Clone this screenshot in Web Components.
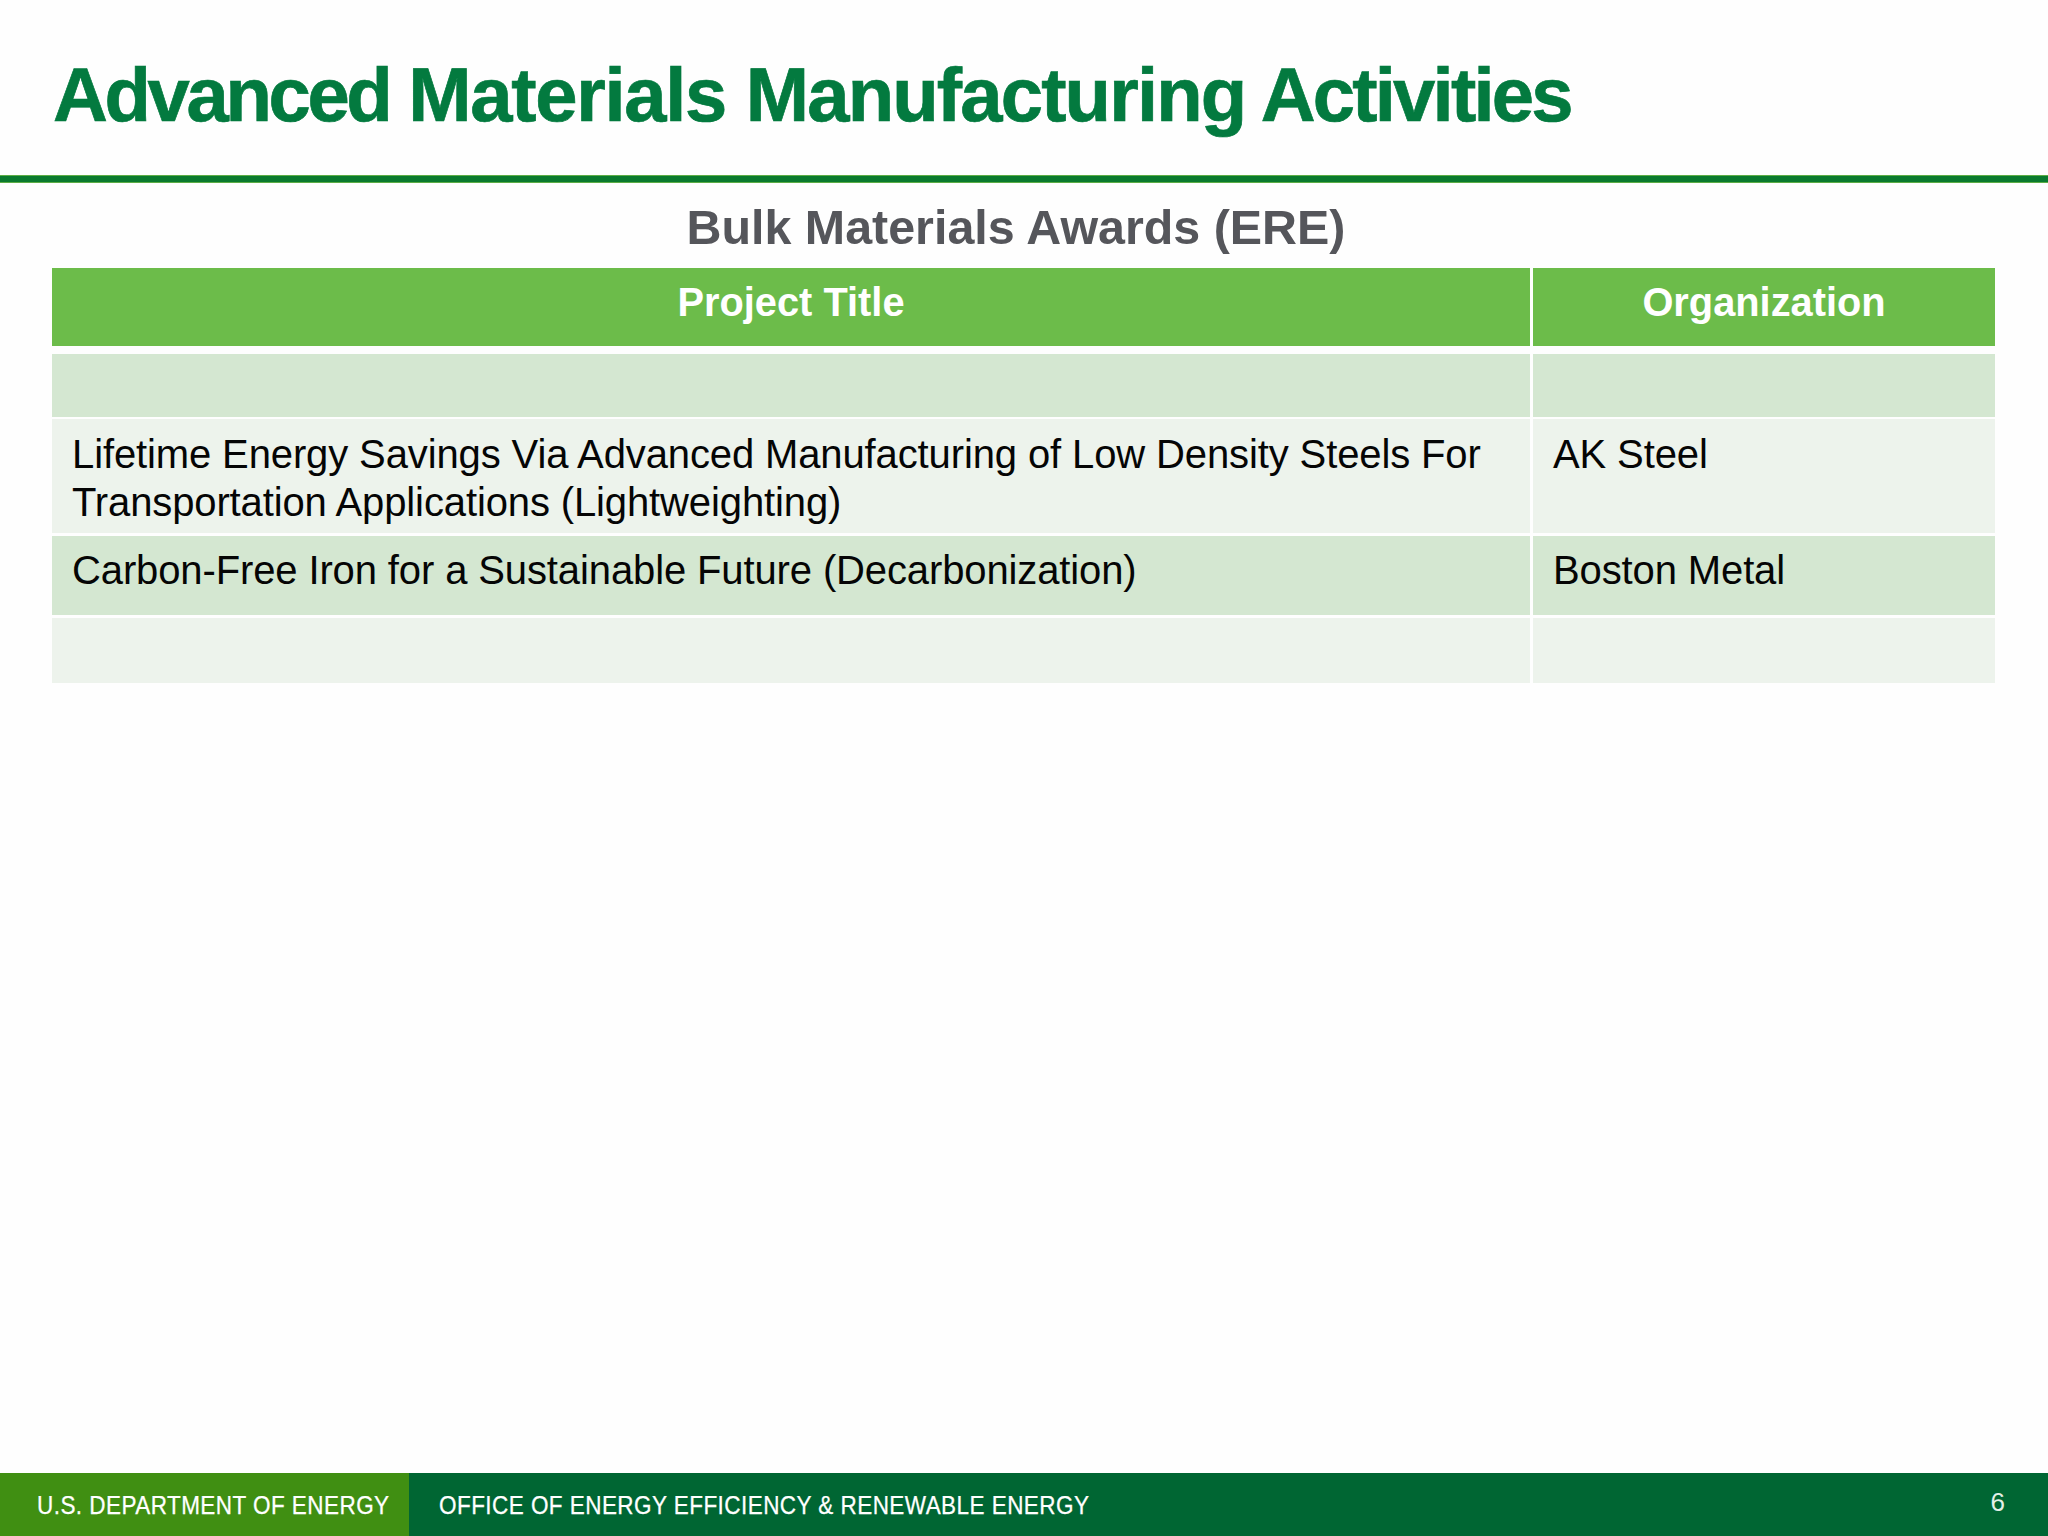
<!DOCTYPE html>
<html><head><meta charset="utf-8"><style>
html,body{margin:0;padding:0;background:#fefefe}
body{width:2048px;height:1536px;overflow:hidden;font-family:"Liberation Sans",Arial,sans-serif}
</style></head><body>
<slide-page>
<slide-title><span style="letter-spacing:-3.35px">Advanced</span> <span style="letter-spacing:-1.33px">Materials</span> <span style="letter-spacing:-1.85px;margin-left:1px">Manufacturing</span> <span style="letter-spacing:-2.8px;margin-left:-3.5px">Activities</span></slide-title>
<slide-subtitle>Bulk Materials Awards (ERE)</slide-subtitle>
<award-table>
<award-row kind="head"><span>Project Title</span><span slot="org">Organization</span></award-row>
<award-row kind="dark" h="63" gap="2"></award-row>
<award-row kind="light" h="114" gap="3"><span>Lifetime Energy Savings Via Advanced Manufacturing of Low Density Steels For Transportation Applications (Lightweighting)</span><span slot="org">AK Steel</span></award-row>
<award-row kind="dark" h="79" gap="3" pad="10"><span>Carbon-Free Iron for a Sustainable Future (Decarbonization)</span><span slot="org">Boston Metal</span></award-row>
<award-row kind="light" h="65" gap="0"></award-row>
</award-table>
<slide-footer page="6"></slide-footer>
</slide-page>
<script>
function def(name,html,init){customElements.define(name,class extends HTMLElement{connectedCallback(){if(this.shadowRoot)return;const r=this.attachShadow({mode:'open'});r.innerHTML=html;if(init)init(this,r);}});}
def('slide-page',`<style>:host{display:flex;flex-direction:column;width:2048px;height:1536px}</style><slot></slot>`);
def('slide-title',`<style>:host{display:flex;flex-direction:column;box-sizing:border-box;height:183px;padding-top:51px;color:#037a3f;font:bold 76px/88px "Liberation Sans",sans-serif;letter-spacing:-2.2px;white-space:nowrap;-webkit-text-stroke:.7px #037a3f}
.t{padding-left:53px}
.rule{margin-top:auto;height:8px;background:linear-gradient(#5cad45 0 1px,#0a7a2e 1px 7px,#5cad45 7px)}</style><div class="t"><slot></slot></div><div class="rule"></div>`);
def('slide-subtitle',`<style>:host{display:block;text-align:center;color:#55565b;font:bold 48.4px/56px "Liberation Sans",sans-serif;margin:16px 0 0 -16px;height:69px}</style><slot></slot>`);
def('award-table',`<style>:host{display:flex;flex-direction:column;margin:0 53px 0 52px;width:1943px}</style><slot></slot>`);
def('award-row',`<style>:host{display:grid;grid-template-columns:1478px 1fr;column-gap:3px}
.c{box-sizing:border-box;padding:11px 20px 0;font:40px/48px "Liberation Sans",sans-serif;letter-spacing:-.12px;color:#050505}
:host([kind=head]) .c{background:#6cbc4a;color:#fff;font:bold 39.8px/48px "Liberation Sans",sans-serif;letter-spacing:0;text-align:center;padding-top:10px;height:78px}
:host([kind=head]){margin-bottom:8px}
:host([kind=dark]) .c{background:#d4e7d1}
:host([kind=light]) .c{background:#edf3ec}
</style><div class="c"><slot></slot></div><div class="c"><slot name="org"></slot></div>`,(h,r)=>{const v=h.getAttribute('h'),p=h.getAttribute('pad'),g=h.getAttribute('gap');r.querySelectorAll('.c').forEach(c=>{if(v)c.style.height=v+'px';if(p)c.style.paddingTop=p+'px'});if(g)h.style.marginBottom=g+'px'});
def('slide-footer',`<style>:host{display:flex;margin-top:auto;height:63px;color:#fff;font:25px/61px "Liberation Sans",sans-serif;letter-spacing:.5px;-webkit-text-stroke:.25px #fff}
.a{width:409px;box-sizing:border-box;padding:2px 0 0 37px;background:#408f12;white-space:nowrap}
.b{flex:1;background:#006633;display:flex;justify-content:space-between;box-sizing:border-box;padding:2px 43px 0 30px}
.s{display:inline-block;transform:scaleX(.9);transform-origin:0 50%;white-space:nowrap}
.n{color:#e4f0e8;font-size:26px;line-height:55.5px;letter-spacing:0;-webkit-text-stroke:0}
</style><div class="a"><span class="s">U.S. DEPARTMENT OF ENERGY</span></div><div class="b"><span class="s">OFFICE OF ENERGY EFFICIENCY &amp; RENEWABLE ENERGY</span><span class="n"></span></div>`,(h,r)=>{r.querySelector('.n').textContent=h.getAttribute('page')});
</script>
</body></html>
